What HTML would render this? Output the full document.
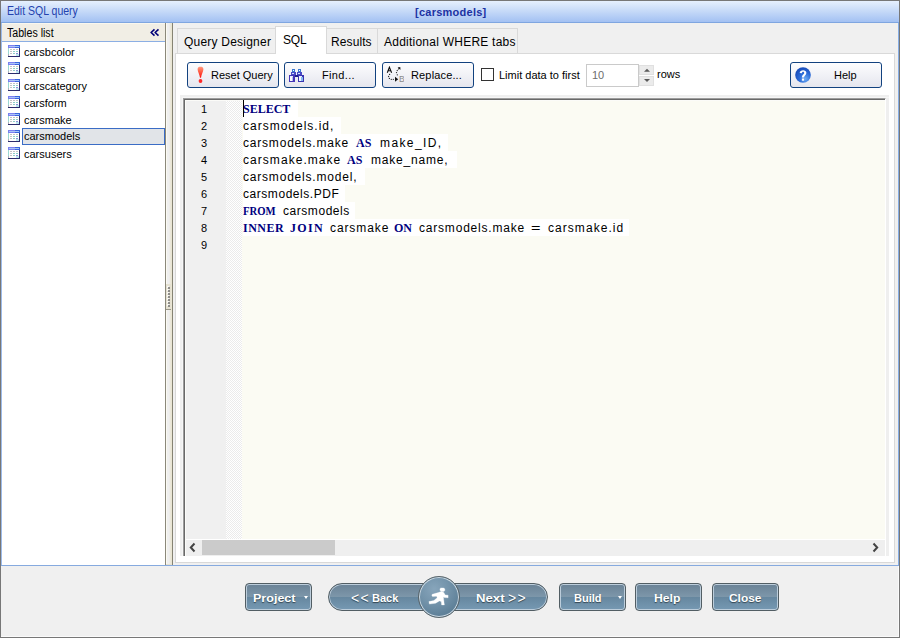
<!DOCTYPE html>
<html><head><meta charset="utf-8">
<style>
*{box-sizing:border-box;margin:0;padding:0}
html,body{width:900px;height:638px;overflow:hidden;background:#f0f0f0;font-family:"Liberation Sans",sans-serif;color:#000}
.a{position:absolute}
#win{left:0;top:0;width:900px;height:638px;border:1px solid #777;background:#f0f0f0}
#title{left:1px;top:1px;width:898px;height:21px;background:linear-gradient(#e6f0fe,#c8dbf8 45%,#a3c1f3)}
#tline{left:1px;top:22px;width:898px;height:1px;background:#7fa6e0}
#ttl1{left:7px;top:4px;font-size:12px;color:#2342ae;white-space:nowrap;transform:scaleX(0.875);transform-origin:0 0}
#ttl2{left:415px;top:6px;font-size:11px;font-weight:bold;color:#1c32a3;letter-spacing:0.25px;white-space:nowrap}
#lb{left:1px;top:23px;width:1px;height:542px;background:#9dbceb}
#rb{left:898px;top:23px;width:1px;height:542px;background:#86ade4}
#bline{left:1px;top:565px;width:898px;height:1px;background:#86aadf}
#bbot{left:1px;top:636px;width:898px;height:1px;background:#fafafa}
#bright{left:898px;top:566px;width:1px;height:71px;background:#fafafa}
#lhead{left:2px;top:23px;width:163px;height:18px;background:#f1eee5;border-top:1px solid #faf7ee}
#lhead span{position:absolute;left:5px;top:2px;font-size:12px;white-space:nowrap;transform:scaleX(0.885);transform-origin:0 0}
#lhline{left:2px;top:41px;width:163px;height:1px;background:#8cafe4}
#list{left:2px;top:42px;width:163px;height:523px;background:#fff}
.it{position:absolute;left:22px;height:17px;font-size:11px;line-height:17px;padding-left:2px;width:143px;padding-top:1px}
.ic{position:absolute;left:8px;width:12px;height:12px;border:1px solid #3b3f8c;border-top:2px solid #5d7be0;background:linear-gradient(#fff,#e8ecf0)}
.ic:before{content:"";position:absolute;left:2px;top:2px;width:7px;height:5px;background:repeating-linear-gradient(90deg,#b9c0c0 0 2px,transparent 2px 3px);}
.sel{background:#e1e4e8;border:1px solid #3a6cc5;padding-left:1px;line-height:15px;padding-top:0}
#sp1{left:165px;top:23px;width:1px;height:542px;background:#8b887a}
#sp2{left:166px;top:23px;width:6px;height:542px;background:linear-gradient(90deg,#fbfaf2 0 1px,#efefef 1px 3px,#e9e5d3 5px 6px);border-bottom:1px solid #e6e2d0}
#sp3{left:172px;top:23px;width:1px;height:542px;background:#858373}
#grip{left:166px;top:284px;width:6px;height:26px;background:#e4e0d0}
.tab{position:absolute;top:28px;height:25px;background:#f0f0f0;border:1px solid #d9d9d9;border-bottom:none;font-size:12px;padding-top:6px;white-space:nowrap}
#panel{left:175px;top:53px;width:720px;height:510px;background:#fff;border:1px solid #d9d9d9}
#tabsel{left:275px;top:26px;width:52px;height:28px;background:#fff;border:1px solid #d9d9d9;border-bottom:none;font-size:12px}
.btn{position:absolute;top:62px;height:26px;border:1px solid #12427f;border-radius:3px;background:linear-gradient(#fdfdfe,#e5e6ee);font-size:11px}
.btn span{position:absolute;top:6px;white-space:nowrap}
#chk{left:481px;top:68px;width:13px;height:13px;border:1px solid #333;background:#fff}
#lim{left:499px;top:69px;font-size:11px;white-space:nowrap}
#spin{left:586px;top:64px;width:53px;height:23px;border:1px solid #cacaca;background:#fff;font-size:11px;color:#6d6d6d}
.sb{position:absolute;left:639px;width:15px;height:10px;background:#ebebeb;border:1px solid #e0e0e0}
#rows{left:657px;top:68px;font-size:11px}
#edframe{left:180px;top:95px;width:709px;height:461px;background:#efefef;border-top:2px solid #efefef;border-left:2px solid #efefef;box-shadow:inset 1px 1px 0 #f6f6f6}
#ed{left:183px;top:98px;width:703px;height:458px;border-top:1px solid #9c9c9c;border-left:1px solid #9c9c9c;border-right:1px solid #fff;box-shadow:inset 1px 1px 0 #696969,inset 2px 2px 0 #fbfbf8;background:#fbfbf3}
#gut{left:186px;top:101px;width:40px;height:438px;background:#f0f0f0}
#fold{left:226px;top:101px;width:16px;height:438px;background-color:#fff;background-image:conic-gradient(#ebebeb 25%,#fff 0 50%,#ebebeb 0 75%,#fff 0);background-size:2px 2px}
.ln{position:absolute;left:185px;width:22px;text-align:right;font-size:11px;line-height:17px}
.rb{position:absolute;left:243px;height:17px;background:#fff}
.t{position:absolute;font-size:12px;line-height:17px;white-space:pre;letter-spacing:0.8px}
.k{position:absolute;font-family:"Liberation Serif",serif;font-weight:bold;font-size:12px;color:#000080;line-height:17px;white-space:pre}
#caret{left:243px;top:100px;width:1px;height:17px;background:#000}
#hs{left:186px;top:539px;width:699px;height:17px;background:#efefef;border-top:1px solid #fff}
#thumb{left:202px;top:540px;width:133px;height:15px;background:#cbcbcb}
.bb{position:absolute;top:583px;height:28px;width:67px;border:1px solid #525e64;border-radius:4px;box-shadow:inset 0 0 0 1px #bccddb;background:linear-gradient(#6a8296 0%,#7d97aa 50%,#66879f 51%,#7699b3 100%);color:#fff;font-size:12px;font-weight:bold;text-shadow:0 1px 1px #33444f}
.bb span,#pill span{position:absolute;top:8px;white-space:nowrap;font-size:11px}
#pill span.n{font-weight:normal;font-size:14px;letter-spacing:1.2px;top:6px}
.dd{position:absolute;left:58px;top:12px;width:0;height:0;border-left:2.5px solid transparent;border-right:2.5px solid transparent;border-top:3px solid #fff}
#pill{left:328px;top:583px;width:220px;height:28px;border:1px solid #525e64;border-radius:14px;box-shadow:inset 0 0 0 1px #bccddb;background:linear-gradient(#6a8296 0%,#7d97aa 50%,#66879f 51%,#7699b3 100%);color:#fff;font-size:12px;font-weight:bold;text-shadow:0 1px 1px #33444f}
#circ{left:418px;top:576px;width:42px;height:42px;border-radius:50%;border:1px solid #59656b;box-shadow:inset 0 0 0 1px #c9d7e1;background:radial-gradient(circle at 38% 30%,#87a5bb 0%,#7393aa 40%,#5a7c94 80%,#587990 100%)}
</style></head><body>
<div class="a" id="win"></div><div class="a" id="title"></div><div class="a" id="tline"></div>
<div class="a" id="ttl1">Edit SQL query</div><div class="a" id="ttl2">[carsmodels]</div>
<div class="a" id="lb"></div><div class="a" id="rb"></div><div class="a" id="bline"></div><div class="a" id="bbot"></div><div class="a" id="bright"></div>
<div class="a" id="lhead"><span>Tables list</span></div><div class="a" id="lhline"></div><div class="a" id="list"></div>
<svg class="a" style="left:8px;top:45px" width="12" height="12" viewBox="0 0 12 12" shape-rendering="crispEdges"><rect x="0" y="0" width="12" height="12" fill="#fff"/><rect x="0" y="0" width="7" height="3" fill="#7b7ff0"/><rect x="7" y="0" width="5" height="3" fill="#3867dc"/><rect x="1" y="1" width="10" height="1" fill="#a9c4f6"/><rect x="0" y="3" width="1" height="6" fill="#9bd9d2"/><rect x="0" y="9" width="1" height="2" fill="#b0b0b8"/><rect x="11" y="3" width="1" height="9" fill="#2c2c6c"/><rect x="0" y="11" width="12" height="1" fill="#2c2c6c"/><rect x="2" y="4" width="2" height="1" fill="#c4c4c4"/><rect x="5" y="4" width="2" height="1" fill="#c4c4c4"/><rect x="8" y="4" width="2" height="1" fill="#c4c4c4"/><rect x="2" y="6" width="2" height="1" fill="#c4c4c4"/><rect x="5" y="6" width="2" height="1" fill="#8ccfc8"/><rect x="8" y="6" width="2" height="1" fill="#8ccfc8"/><rect x="2" y="8" width="2" height="1" fill="#c4c4c4"/><rect x="5" y="8" width="2" height="1" fill="#8ccfc8"/><rect x="8" y="8" width="2" height="1" fill="#8f8fd8"/><rect x="8" y="9" width="3" height="2" fill="#bfe9f0"/></svg>
<div class="it" style="top:43px">carsbcolor</div>
<svg class="a" style="left:8px;top:62px" width="12" height="12" viewBox="0 0 12 12" shape-rendering="crispEdges"><rect x="0" y="0" width="12" height="12" fill="#fff"/><rect x="0" y="0" width="7" height="3" fill="#7b7ff0"/><rect x="7" y="0" width="5" height="3" fill="#3867dc"/><rect x="1" y="1" width="10" height="1" fill="#a9c4f6"/><rect x="0" y="3" width="1" height="6" fill="#9bd9d2"/><rect x="0" y="9" width="1" height="2" fill="#b0b0b8"/><rect x="11" y="3" width="1" height="9" fill="#2c2c6c"/><rect x="0" y="11" width="12" height="1" fill="#2c2c6c"/><rect x="2" y="4" width="2" height="1" fill="#c4c4c4"/><rect x="5" y="4" width="2" height="1" fill="#c4c4c4"/><rect x="8" y="4" width="2" height="1" fill="#c4c4c4"/><rect x="2" y="6" width="2" height="1" fill="#c4c4c4"/><rect x="5" y="6" width="2" height="1" fill="#8ccfc8"/><rect x="8" y="6" width="2" height="1" fill="#8ccfc8"/><rect x="2" y="8" width="2" height="1" fill="#c4c4c4"/><rect x="5" y="8" width="2" height="1" fill="#8ccfc8"/><rect x="8" y="8" width="2" height="1" fill="#8f8fd8"/><rect x="8" y="9" width="3" height="2" fill="#bfe9f0"/></svg>
<div class="it" style="top:60px">carscars</div>
<svg class="a" style="left:8px;top:79px" width="12" height="12" viewBox="0 0 12 12" shape-rendering="crispEdges"><rect x="0" y="0" width="12" height="12" fill="#fff"/><rect x="0" y="0" width="7" height="3" fill="#7b7ff0"/><rect x="7" y="0" width="5" height="3" fill="#3867dc"/><rect x="1" y="1" width="10" height="1" fill="#a9c4f6"/><rect x="0" y="3" width="1" height="6" fill="#9bd9d2"/><rect x="0" y="9" width="1" height="2" fill="#b0b0b8"/><rect x="11" y="3" width="1" height="9" fill="#2c2c6c"/><rect x="0" y="11" width="12" height="1" fill="#2c2c6c"/><rect x="2" y="4" width="2" height="1" fill="#c4c4c4"/><rect x="5" y="4" width="2" height="1" fill="#c4c4c4"/><rect x="8" y="4" width="2" height="1" fill="#c4c4c4"/><rect x="2" y="6" width="2" height="1" fill="#c4c4c4"/><rect x="5" y="6" width="2" height="1" fill="#8ccfc8"/><rect x="8" y="6" width="2" height="1" fill="#8ccfc8"/><rect x="2" y="8" width="2" height="1" fill="#c4c4c4"/><rect x="5" y="8" width="2" height="1" fill="#8ccfc8"/><rect x="8" y="8" width="2" height="1" fill="#8f8fd8"/><rect x="8" y="9" width="3" height="2" fill="#bfe9f0"/></svg>
<div class="it" style="top:77px">carscategory</div>
<svg class="a" style="left:8px;top:96px" width="12" height="12" viewBox="0 0 12 12" shape-rendering="crispEdges"><rect x="0" y="0" width="12" height="12" fill="#fff"/><rect x="0" y="0" width="7" height="3" fill="#7b7ff0"/><rect x="7" y="0" width="5" height="3" fill="#3867dc"/><rect x="1" y="1" width="10" height="1" fill="#a9c4f6"/><rect x="0" y="3" width="1" height="6" fill="#9bd9d2"/><rect x="0" y="9" width="1" height="2" fill="#b0b0b8"/><rect x="11" y="3" width="1" height="9" fill="#2c2c6c"/><rect x="0" y="11" width="12" height="1" fill="#2c2c6c"/><rect x="2" y="4" width="2" height="1" fill="#c4c4c4"/><rect x="5" y="4" width="2" height="1" fill="#c4c4c4"/><rect x="8" y="4" width="2" height="1" fill="#c4c4c4"/><rect x="2" y="6" width="2" height="1" fill="#c4c4c4"/><rect x="5" y="6" width="2" height="1" fill="#8ccfc8"/><rect x="8" y="6" width="2" height="1" fill="#8ccfc8"/><rect x="2" y="8" width="2" height="1" fill="#c4c4c4"/><rect x="5" y="8" width="2" height="1" fill="#8ccfc8"/><rect x="8" y="8" width="2" height="1" fill="#8f8fd8"/><rect x="8" y="9" width="3" height="2" fill="#bfe9f0"/></svg>
<div class="it" style="top:94px">carsform</div>
<svg class="a" style="left:8px;top:113px" width="12" height="12" viewBox="0 0 12 12" shape-rendering="crispEdges"><rect x="0" y="0" width="12" height="12" fill="#fff"/><rect x="0" y="0" width="7" height="3" fill="#7b7ff0"/><rect x="7" y="0" width="5" height="3" fill="#3867dc"/><rect x="1" y="1" width="10" height="1" fill="#a9c4f6"/><rect x="0" y="3" width="1" height="6" fill="#9bd9d2"/><rect x="0" y="9" width="1" height="2" fill="#b0b0b8"/><rect x="11" y="3" width="1" height="9" fill="#2c2c6c"/><rect x="0" y="11" width="12" height="1" fill="#2c2c6c"/><rect x="2" y="4" width="2" height="1" fill="#c4c4c4"/><rect x="5" y="4" width="2" height="1" fill="#c4c4c4"/><rect x="8" y="4" width="2" height="1" fill="#c4c4c4"/><rect x="2" y="6" width="2" height="1" fill="#c4c4c4"/><rect x="5" y="6" width="2" height="1" fill="#8ccfc8"/><rect x="8" y="6" width="2" height="1" fill="#8ccfc8"/><rect x="2" y="8" width="2" height="1" fill="#c4c4c4"/><rect x="5" y="8" width="2" height="1" fill="#8ccfc8"/><rect x="8" y="8" width="2" height="1" fill="#8f8fd8"/><rect x="8" y="9" width="3" height="2" fill="#bfe9f0"/></svg>
<div class="it" style="top:111px">carsmake</div>
<svg class="a" style="left:8px;top:130px" width="12" height="12" viewBox="0 0 12 12" shape-rendering="crispEdges"><rect x="0" y="0" width="12" height="12" fill="#fff"/><rect x="0" y="0" width="7" height="3" fill="#7b7ff0"/><rect x="7" y="0" width="5" height="3" fill="#3867dc"/><rect x="1" y="1" width="10" height="1" fill="#a9c4f6"/><rect x="0" y="3" width="1" height="6" fill="#9bd9d2"/><rect x="0" y="9" width="1" height="2" fill="#b0b0b8"/><rect x="11" y="3" width="1" height="9" fill="#2c2c6c"/><rect x="0" y="11" width="12" height="1" fill="#2c2c6c"/><rect x="2" y="4" width="2" height="1" fill="#c4c4c4"/><rect x="5" y="4" width="2" height="1" fill="#c4c4c4"/><rect x="8" y="4" width="2" height="1" fill="#c4c4c4"/><rect x="2" y="6" width="2" height="1" fill="#c4c4c4"/><rect x="5" y="6" width="2" height="1" fill="#8ccfc8"/><rect x="8" y="6" width="2" height="1" fill="#8ccfc8"/><rect x="2" y="8" width="2" height="1" fill="#c4c4c4"/><rect x="5" y="8" width="2" height="1" fill="#8ccfc8"/><rect x="8" y="8" width="2" height="1" fill="#8f8fd8"/><rect x="8" y="9" width="3" height="2" fill="#bfe9f0"/></svg>
<div class="it sel" style="top:128px">carsmodels</div>
<svg class="a" style="left:8px;top:147px" width="12" height="12" viewBox="0 0 12 12" shape-rendering="crispEdges"><rect x="0" y="0" width="12" height="12" fill="#fff"/><rect x="0" y="0" width="7" height="3" fill="#7b7ff0"/><rect x="7" y="0" width="5" height="3" fill="#3867dc"/><rect x="1" y="1" width="10" height="1" fill="#a9c4f6"/><rect x="0" y="3" width="1" height="6" fill="#9bd9d2"/><rect x="0" y="9" width="1" height="2" fill="#b0b0b8"/><rect x="11" y="3" width="1" height="9" fill="#2c2c6c"/><rect x="0" y="11" width="12" height="1" fill="#2c2c6c"/><rect x="2" y="4" width="2" height="1" fill="#c4c4c4"/><rect x="5" y="4" width="2" height="1" fill="#c4c4c4"/><rect x="8" y="4" width="2" height="1" fill="#c4c4c4"/><rect x="2" y="6" width="2" height="1" fill="#c4c4c4"/><rect x="5" y="6" width="2" height="1" fill="#8ccfc8"/><rect x="8" y="6" width="2" height="1" fill="#8ccfc8"/><rect x="2" y="8" width="2" height="1" fill="#c4c4c4"/><rect x="5" y="8" width="2" height="1" fill="#8ccfc8"/><rect x="8" y="8" width="2" height="1" fill="#8f8fd8"/><rect x="8" y="9" width="3" height="2" fill="#bfe9f0"/></svg>
<div class="it" style="top:145px">carsusers</div>
<div class="a" id="sp1"></div><div class="a" id="sp2"></div><div class="a" id="sp3"></div><div class="a" style="left:166px;top:284px;width:5px;height:26px;background:#e5e1d1;border-bottom:1px solid #9a978a"></div><div class="a" style="left:168px;top:287px;width:2px;height:2px;border-radius:1px;background:#6e6e6e;box-shadow:-1px -1px 0 #fff"></div><div class="a" style="left:168px;top:290px;width:2px;height:2px;border-radius:1px;background:#6e6e6e;box-shadow:-1px -1px 0 #fff"></div><div class="a" style="left:168px;top:293px;width:2px;height:2px;border-radius:1px;background:#6e6e6e;box-shadow:-1px -1px 0 #fff"></div><div class="a" style="left:168px;top:296px;width:2px;height:2px;border-radius:1px;background:#6e6e6e;box-shadow:-1px -1px 0 #fff"></div><div class="a" style="left:168px;top:299px;width:2px;height:2px;border-radius:1px;background:#6e6e6e;box-shadow:-1px -1px 0 #fff"></div><div class="a" style="left:168px;top:302px;width:2px;height:2px;border-radius:1px;background:#6e6e6e;box-shadow:-1px -1px 0 #fff"></div><div class="a" style="left:168px;top:305px;width:2px;height:2px;border-radius:1px;background:#6e6e6e;box-shadow:-1px -1px 0 #fff"></div><svg class="a" style="left:149px;top:27px" width="12" height="11" viewBox="0 0 12 11"><path d="M5.5,2.3 L2.1,5.5 L5.5,8.7 M9.5,2.3 L6.1,5.5 L9.5,8.7" stroke="#000078" stroke-width="1.6" fill="none" stroke-linecap="butt" stroke-linejoin="round"/></svg>
<div class="a" id="panel"></div>
<div class="tab" style="left:177px;width:99px;padding-left:6px;letter-spacing:0.22px">Query Designer</div>
<div class="a" id="tabsel"><span style="position:absolute;left:7px;top:6px;letter-spacing:-0.2px">SQL</span></div>
<div class="tab" style="left:326px;width:52px;padding-left:4px;letter-spacing:0.1px">Results</div>
<div class="tab" style="left:377px;width:141px;padding-left:6px;letter-spacing:0.24px">Additional WHERE tabs</div>
<div class="btn" style="left:187px;width:92px"><span style="left:23px">Reset Query</span></div>
<div class="btn" style="left:284px;width:92px"><span style="left:37px;letter-spacing:0.35px">Find...</span></div>
<div class="btn" style="left:382px;width:92px"><span style="left:28px;letter-spacing:0.15px">Replace...</span></div>
<div class="a" id="chk"></div><div class="a" id="lim">Limit data to first</div>
<div class="a" id="spin"><span style="position:absolute;left:5px;top:4px">10</span></div>
<div class="sb" style="top:65px"></div><div class="sb" style="top:76px"></div><div class="a" id="rows">rows</div><svg class="a" style="left:640px;top:65px" width="14" height="22" viewBox="0 0 14 22"><path d="M4,6.8 L7,3.8 L10,6.8 Z" fill="#5a5a5a"/><path d="M4,14 L7,17 L10,14 Z" fill="#5a5a5a"/></svg>
<div class="btn" style="left:790px;width:92px"><span style="left:43px">Help</span></div>
<svg class="a" style="left:196px;top:66px" width="9" height="18" viewBox="0 0 9 18"><defs><linearGradient id="eg" x1="0" y1="0" x2="0" y2="1"><stop offset="0" stop-color="#ff9a80"/><stop offset="0.35" stop-color="#ff6a50"/><stop offset="1" stop-color="#ff1010"/></linearGradient></defs><path d="M1.6,3.2 C1.6,1.3 2.8,0.8 4.5,0.8 C6.2,0.8 7.4,1.3 7.4,3.2 C7.4,5.5 5.5,8 5,11.8 L4,11.8 C3.5,8 1.6,5.5 1.6,3.2 Z" fill="url(#eg)"/><circle cx="4.5" cy="15" r="1.9" fill="#ff2a2a"/></svg><svg class="a" style="left:289px;top:68px" width="16" height="15" viewBox="0 0 16 15" shape-rendering="crispEdges"><rect x="3" y="1" width="3" height="3" fill="#3a78d0"/><rect x="4" y="2" width="1" height="1" fill="#fff"/><rect x="9" y="1" width="3" height="3" fill="#3a78d0"/><rect x="10" y="2" width="1" height="1" fill="#fff"/><rect x="2" y="4" width="5" height="3" fill="#4a48c4"/><rect x="3" y="5" width="2" height="1" fill="#cfe0ff"/><rect x="8" y="4" width="5" height="3" fill="#4a48c4"/><rect x="9" y="5" width="2" height="1" fill="#cfe0ff"/><rect x="0" y="7" width="6" height="7" fill="#4636b8"/><rect x="1" y="8" width="3" height="1" fill="#e6ecff"/><rect x="1" y="9" width="2" height="4" fill="#fafbff"/><rect x="3" y="9" width="1" height="4" fill="#b8c0ec"/><rect x="9" y="7" width="6" height="7" fill="#3a34b0"/><rect x="10" y="8" width="3" height="1" fill="#e6ecff"/><rect x="10" y="9" width="2" height="4" fill="#f2f6ff"/><rect x="12" y="9" width="2" height="4" fill="#86b8ee"/><rect x="6" y="7" width="3" height="2" fill="#20208a"/></svg><svg class="a" style="left:386px;top:66px" width="18" height="18" viewBox="0 0 18 18"><path d="M1.3,6.8 L3.4,1.2 L5.6,6.8 M2.1,4.8 L4.8,4.8" stroke="#111" stroke-width="1.1" fill="none"/><g fill="#222"><circle cx="3.6" cy="8.4" r="0.65"/><circle cx="2.6" cy="10.5" r="0.65"/><circle cx="3.4" cy="12.4" r="0.65"/><circle cx="5.3" cy="13.3" r="0.65"/><circle cx="7.3" cy="13.3" r="0.65"/><circle cx="11.2" cy="4.6" r="0.65"/><circle cx="10.5" cy="6.6" r="0.65"/><circle cx="11.3" cy="8.8" r="0.65"/></g><path d="M9,10.8 L12.2,13.3 L9,15.8 Z" fill="#111"/><path d="M11.6,1.2 L14.4,1.2 L14.4,4 Z" fill="#111"/><path d="M11.8,3.6 L13.6,1.9" stroke="#111" stroke-width="1"/><text x="13" y="15.6" font-family="Liberation Sans" font-size="8.5" fill="#8a8a8a">B</text></svg><svg class="a" style="left:795px;top:67px" width="16" height="16" viewBox="0 0 16 16"><defs><radialGradient id="hg" cx="0.65" cy="0.75" r="0.7"><stop offset="0" stop-color="#6aaaf4"/><stop offset="0.55" stop-color="#2a6ad8"/><stop offset="1" stop-color="#1b4fbc"/></radialGradient></defs><circle cx="8" cy="8" r="7.8" fill="url(#hg)"/><path d="M4.7,6 C4.7,2.4 11.4,2.3 11.4,5.8 C11.4,8.1 9.1,8.4 9.1,10.6 L6.9,10.6 C6.9,7.6 9.2,7.4 9.2,5.9 C9.2,4.3 6.9,4.4 6.9,6.3 Z" fill="#fff"/><rect x="6.9" y="11.5" width="2.2" height="2.2" fill="#fff"/></svg>
<div class="a" id="edframe"></div><div class="a" id="ed"></div><div class="a" id="gut"></div><div class="a" id="fold"></div>
<div class="ln" style="top:101px">1</div>
<div class="rb" style="top:100px;width:55px"></div>
<div class="k" style="left:243px;top:101px;letter-spacing:0px">SELECT</div>
<div class="ln" style="top:118px">2</div>
<div class="rb" style="top:117px;width:98px"></div>
<div class="t" style="left:243px;top:118px;letter-spacing:1.0px">carsmodels.id,</div>
<div class="ln" style="top:135px">3</div>
<div class="rb" style="top:134px;width:205px"></div>
<div class="t" style="left:243px;top:135px;letter-spacing:0.8px">carsmodels.make</div>
<div class="k" style="left:356px;top:135px;letter-spacing:0px">AS</div>
<div class="t" style="left:380px;top:135px;letter-spacing:1.4px">make_ID,</div>
<div class="ln" style="top:152px">4</div>
<div class="rb" style="top:151px;width:214px"></div>
<div class="t" style="left:243px;top:152px;letter-spacing:1.05px">carsmake.make</div>
<div class="k" style="left:347px;top:152px;letter-spacing:0px">AS</div>
<div class="t" style="left:371px;top:152px;letter-spacing:0.8px">make_name,</div>
<div class="ln" style="top:169px">5</div>
<div class="rb" style="top:168px;width:122px"></div>
<div class="t" style="left:243px;top:169px;letter-spacing:0.8px">carsmodels.model,</div>
<div class="ln" style="top:186px">6</div>
<div class="rb" style="top:185px;width:102px"></div>
<div class="t" style="left:243px;top:186px;letter-spacing:0.55px">carsmodels.PDF</div>
<div class="ln" style="top:203px">7</div>
<div class="rb" style="top:202px;width:112px"></div>
<div class="k" style="left:243px;top:203px;transform:scaleX(0.89);transform-origin:0 0">FROM</div>
<div class="t" style="left:283px;top:203px;letter-spacing:0.55px">carsmodels</div>
<div class="ln" style="top:220px">8</div>
<div class="rb" style="top:219px;width:386px"></div>
<div class="k" style="left:243px;top:220px;letter-spacing:0.5px">INNER</div>
<div class="k" style="left:290px;top:220px;letter-spacing:1.3px">JOIN</div>
<div class="t" style="left:330px;top:220px;letter-spacing:0.9px">carsmake</div>
<div class="k" style="left:394px;top:220px;letter-spacing:0px">ON</div>
<div class="t" style="left:419px;top:220px;letter-spacing:0.8px">carsmodels.make</div>
<div class="t" style="left:531px;top:220px;transform:scaleX(1.35);transform-origin:0 0">=</div>
<div class="t" style="left:548px;top:220px;letter-spacing:1.05px">carsmake.id</div>
<div class="ln" style="top:237px">9</div>
<div class="a" id="caret"></div><div class="a" id="hs"></div><div class="a" id="thumb"></div><svg class="a" style="left:188px;top:542px" width="10" height="11" viewBox="0 0 10 11"><path d="M6.5,1.5 L2.8,5.5 L6.5,9.5" stroke="#444" stroke-width="2" fill="none"/></svg><svg class="a" style="left:871px;top:542px" width="10" height="11" viewBox="0 0 10 11"><path d="M2.5,1.5 L6.2,5.5 L2.5,9.5" stroke="#444" stroke-width="2" fill="none"/></svg>
<div class="bb" style="left:245px"><span style="left:7px;transform:scaleX(1.14);transform-origin:0 0">Project</span><i class="dd"></i></div>
<div class="a" id="pill"><span class="n" style="left:22px">&lt;&lt;</span><span style="left:43px">Back</span><span style="left:147px;transform:scaleX(1.2);transform-origin:0 0">Next</span><span class="n" style="left:179px">&gt;&gt;</span></div>
<div class="a" id="circ"></div><svg class="a" style="left:424px;top:584px" width="28" height="24" viewBox="0 0 28 24"><g fill="#fff" stroke="#fff" stroke-width="0.3" stroke-linejoin="round"><path d="M15.9,5.2 C15.9,3.9 17,3.9 18.3,3.9 C20,3.9 20.9,4.3 20.9,5.7 C20.9,7.1 20,7.5 18.4,7.5 C16.8,7.5 15.9,6.9 15.9,5.2 Z"/><path d="M17.4,7.4 L19.8,8.4 L21.2,10.9 L24.1,11.2 L24.1,13.8 L20.2,13.5 L19.4,12.8 L19.7,15.8 L20.4,20.9 L17.6,20.9 L17.2,17.4 L15.4,16.9 L11.6,19.2 L5.4,20.1 L4.9,17.6 L9.9,16.5 L13.2,13.7 L12.6,12.2 L8.6,12.5 C7.8,12.4 7.6,10.6 8.3,10.3 L14.4,8.6 Z"/></g></svg>
<div class="bb" style="left:559px"><span style="left:14px">Build</span><i class="dd"></i></div>
<div class="bb" style="left:635px"><span style="left:18px;transform:scaleX(1.11);transform-origin:0 0">Help</span></div>
<div class="bb" style="left:712px"><span style="left:16px;transform:scaleX(1.08);transform-origin:0 0">Close</span></div>
</body></html>
